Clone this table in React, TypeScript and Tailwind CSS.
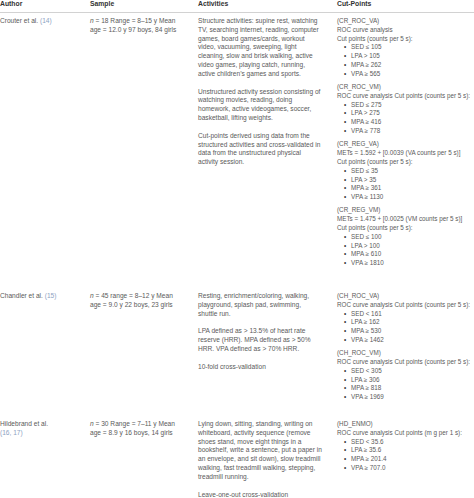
import React from "react";

type CutGroup = { label: string; lines: string[]; items: string[] };
type Row = {
  author: React.ReactNode;
  sample: [string, string];
  activities: string[][];
  cuts: CutGroup[];
  pad: string;
};

const Cite = ({ children }: { children: React.ReactNode }) => (
  <span className="text-[#8da2c2]">{children}</span>
);

const rows: Row[] = [
  {
    author: (
      <>
        Crouter et al. <Cite>(14)</Cite>
      </>
    ),
    sample: ["= 18 Range = 8–15 y Mean", "age = 12.0 y 97 boys, 84 girls"],
    activities: [
      [
        "Structure activities: supine rest, watching",
        "TV, searching internet, reading, computer",
        "games, board games/cards, workout",
        "video, vacuuming, sweeping, light",
        "cleaning, slow and brisk walking, active",
        "video games, playing catch, running,",
        "active children’s games and sports.",
      ],
      [
        "Unstructured activity session consisting of",
        "watching movies, reading, doing",
        "homework, active videogames, soccer,",
        "basketball, lifting weights.",
      ],
      [
        "Cut-points derived using data from the",
        "structured activities and cross-validated in",
        "data from the unstructured physical",
        "activity session.",
      ],
    ],
    cuts: [
      {
        label: "(CR_ROC_VA)",
        lines: ["ROC curve analysis", "Cut points (counts per 5 s):"],
        items: ["SED ≤ 105", "LPA > 105", "MPA ≥ 262", "VPA ≥ 565"],
      },
      {
        label: "(CR_ROC_VM)",
        lines: ["ROC curve analysis Cut points (counts per 5 s):"],
        items: ["SED ≤ 275", "LPA > 275", "MPA ≥ 416", "VPA ≥ 778"],
      },
      {
        label: "(CR_REG_VA)",
        lines: ["METs = 1.592 + [0.0039 (VA counts per 5 s)]", "Cut points (counts per 5 s):"],
        items: ["SED ≤ 35", "LPA > 35", "MPA ≥ 361", "VPA ≥ 1130"],
      },
      {
        label: "(CR_REG_VM)",
        lines: ["METs = 1.475 + [0.0025 (VM counts per 5 s)]", "Cut points (counts per 5 s):"],
        items: ["SED ≤ 100", "LPA > 100", "MPA ≥ 610", "VPA ≥ 1810"],
      },
    ],
    pad: "pt-[4px]",
  },
  {
    author: (
      <>
        Chandler et al. <Cite>(15)</Cite>
      </>
    ),
    sample: ["= 45 range = 8–12 y Mean", "age = 9.0 y 22 boys, 23 girls"],
    activities: [
      [
        "Resting, enrichment/coloring, walking,",
        "playground, splash pad, swimming,",
        "shuttle run.",
      ],
      [
        "LPA defined as > 13.5% of heart rate",
        "reserve (HRR). MPA defined as > 50%",
        "HRR. VPA defined as > 70% HRR.",
      ],
      ["10-fold cross-validation"],
    ],
    cuts: [
      {
        label: "(CH_ROC_VA)",
        lines: ["ROC curve analysis Cut points (counts per 5 s):"],
        items: ["SED < 161", "LPA ≥ 162", "MPA ≥ 530", "VPA ≥ 1462"],
      },
      {
        label: "(CH_ROC_VM)",
        lines: ["ROC curve analysis Cut points (counts per 5 s):"],
        items: ["SED < 305", "LPA ≥ 306", "MPA ≥ 818", "VPA ≥ 1969"],
      },
    ],
    pad: "pt-[24px]",
  },
  {
    author: (
      <>
        Hildebrand et al.
        <br />
        <Cite>(16, 17)</Cite>
      </>
    ),
    sample: ["= 30 Range = 7–11 y Mean", "age = 8.9 y 16 boys, 14 girls"],
    activities: [
      [
        "Lying down, sitting, standing, writing on",
        "whiteboard, activity sequence (remove",
        "shoes stand, move eight things in a",
        "bookshelf, write a sentence, put a paper in",
        "an envelope, and sit down), slow treadmill",
        "walking, fast treadmill walking, stepping,",
        "treadmill running.",
      ],
      ["Leave-one-out cross-validation"],
    ],
    cuts: [
      {
        label: "(HD_ENMO)",
        lines: ["ROC curve analysis Cut points (m g per 1 s):"],
        items: ["SED < 35.6", "LPA ≥ 35.6", "MPA ≥ 201.4", "VPA ≥ 707.0"],
      },
    ],
    pad: "pt-[18px]",
  },
];

const cols = "grid grid-cols-[90px_108px_139px_1fr]";

export default function App() {
  return (
    <div className="w-[474px] h-[498px] overflow-hidden bg-white font-['Liberation_Sans',Arial,sans-serif] text-[6.6px] leading-[8.8px] text-[#5a5a5a]">
      <div className={`${cols} h-[13px] border-b border-[#d2d2d2] text-[6.8px] font-bold text-[#333]`}>
        <div className="-mt-[1px] leading-[9px]">Author</div>
        <div className="-mt-[1px] leading-[9px]">Sample</div>
        <div className="-mt-[1px] leading-[9px]">Activities</div>
        <div className="-mt-[1px] leading-[9px]">Cut-Points</div>
      </div>

      {rows.map((row, i) => (
        <div key={i} className={`${cols} ${row.pad}`}>
          <div>{row.author}</div>
          <div>
            <div>
              <span className="italic">n</span> {row.sample[0]}
            </div>
            <div>{row.sample[1]}</div>
          </div>
          <div className="flex flex-col gap-[9px]">
            {row.activities.map((para, j) => (
              <div key={j} className="whitespace-nowrap">
                {para.map((line) => (
                  <div key={line}>{line}</div>
                ))}
              </div>
            ))}
          </div>
          <div className="flex flex-col gap-[4.5px] whitespace-nowrap text-[6.3px]">
            {row.cuts.map((g) => (
              <div key={g.label}>
                <div>{g.label}</div>
                {g.lines.map((line) => (
                  <div key={line}>{line}</div>
                ))}
                <ul>
                  {g.items.map((it) => (
                    <li key={it} className="flex pl-[7px]">
                      <span className="w-[7px] text-[#333]">•</span>
                      <span>{it}</span>
                    </li>
                  ))}
                </ul>
              </div>
            ))}
          </div>
        </div>
      ))}
    </div>
  );
}
